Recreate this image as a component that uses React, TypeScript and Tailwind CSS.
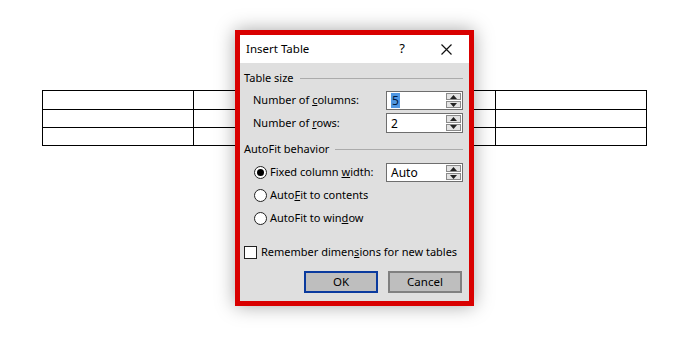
import React from "react";

const font = { fontFamily: '"Noto Sans", "Segoe UI", Arial, sans-serif' };

function Spinner() {
  return (
    <div className="ml-auto mr-[1px] my-[1px] flex w-[15px] flex-col gap-[1px] self-stretch">
      <div className="flex flex-1 items-center justify-center border border-[#8a8a8a] bg-[#e3e3e3]">
        <svg width="7" height="4" viewBox="0 0 7 4"><path d="M3.5 0 L7 4 L0 4 Z" fill="#222" /></svg>
      </div>
      <div className="flex flex-1 items-center justify-center border border-[#8a8a8a] bg-[#e3e3e3]">
        <svg width="7" height="4" viewBox="0 0 7 4"><path d="M0 0 L7 0 L3.5 4 Z" fill="#222" /></svg>
      </div>
    </div>
  );
}

function NumInput({ value, selected, h }: { value: string; selected?: boolean; h: string }) {
  return (
    <div className={`flex w-[77px] ${h} items-stretch border border-[#6e6e6e] bg-white`}>
      <div className="flex items-center pl-[4px]">
        <span className={selected ? "bg-[#4f97e3] px-[1px] text-[12px] leading-[15px] text-[#001a40]" : "text-[12px] leading-[15px]"}>{value}</span>
      </div>
      <Spinner />
    </div>
  );
}

function Radio({ checked }: { checked?: boolean }) {
  return (
    <div className="flex h-[13px] w-[13px] shrink-0 items-center justify-center rounded-full border border-[#222] bg-white">
      {checked && <div className="h-[7px] w-[7px] rounded-full bg-black" />}
    </div>
  );
}

function GroupHead({ label }: { label: string }) {
  return (
    <div className="flex h-[16px] items-center gap-[6px]">
      <span className="whitespace-nowrap">{label}</span>
      <div className="h-px flex-1 bg-[#ababab]" />
    </div>
  );
}

export default function App() {
  const cells = [0, 1, 2];
  return (
    <div className="relative h-[351px] w-[695px] overflow-hidden bg-white" style={font}>
      <div className="pl-[42px] pt-[90px]">
        <table className="border-collapse">
          <tbody>
            {cells.map((r) => (
              <tr key={r} className={r === 0 ? "h-[19px]" : "h-[18px]"}>
                {[0, 1, 2, 3].map((c) => (
                  <td key={c} className="w-[151px] border border-black p-0" />
                ))}
              </tr>
            ))}
          </tbody>
        </table>
      </div>

      <div className="absolute left-[235px] top-[30px] flex h-[276px] w-[239px] flex-col whitespace-nowrap border-[5px] border-[#d90000] text-[11px] text-black shadow-[0_0_18px_rgba(0,0,0,0.35)]">
        <div className="flex h-[28px] items-center bg-white pl-[6px] pr-[17px]">
          <span className="text-[11.5px]">Insert Table</span>
          <div className="flex-1" />
          <span className="text-[13px]">?</span>
          <svg className="ml-[36px]" width="11" height="11" viewBox="0 0 11 11">
            <path d="M0.5 0.5 L10.5 10.5 M10.5 0.5 L0.5 10.5" stroke="#111" strokeWidth="1.2" />
          </svg>
        </div>
        <div className="flex flex-1 flex-col bg-[#dfdfdf] pl-[4px] pr-[6px]">
          <div className="mt-[7px]">
            <GroupHead label="Table size" />
          </div>
          <div className="ml-[9px] mt-[5px] flex items-center justify-between">
            <span>Number of <u>c</u>olumns:</span>
            <NumInput value="5" selected h="h-[19px]" />
          </div>
          <div className="ml-[9px] mt-[3px] flex items-center justify-between">
            <span>Number of <u>r</u>ows:</span>
            <NumInput value="2" h="h-[20px]" />
          </div>
          <div className="mt-[8px]">
            <GroupHead label="AutoFit behavior" />
          </div>
          <div className="ml-[10px] mt-[6px] flex flex-col gap-[4px]">
            <div className="flex h-[19px] items-center">
              <Radio checked />
              <span className="ml-[3px]">Fixed column <u>w</u>idth:</span>
              <div className="ml-auto">
                <NumInput value="Auto" h="h-[19px]" />
              </div>
            </div>
            <div className="flex h-[19px] items-center">
              <Radio />
              <span className="ml-[3px]">Auto<u>F</u>it to contents</span>
            </div>
            <div className="flex h-[19px] items-center">
              <Radio />
              <span className="ml-[3px]">AutoFit to win<u>d</u>ow</span>
            </div>
          </div>
          <div className="mt-[15px] flex h-[19px] items-center">
            <div className="h-[13px] w-[13px] shrink-0 border border-[#222] bg-white" />
            <span className="ml-[4px]">Remember dimen<u>s</u>ions for new tables</span>
          </div>
          <div className="mt-[9px] flex justify-end gap-[10px] pr-[1px]">
            <button className="flex h-[22px] w-[74px] items-center justify-center border-2 border-[#0a3a9e] bg-[#bebebe] text-[11.5px]">OK</button>
            <button className="flex h-[22px] w-[74px] items-center justify-center border-2 border-[#808080] bg-[#bebebe] text-[11.5px]">Cancel</button>
          </div>
        </div>
      </div>
    </div>
  );
}
